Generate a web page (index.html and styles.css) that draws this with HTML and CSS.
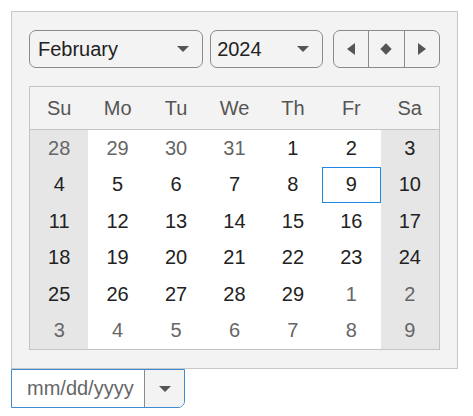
FILE: index.html
```html
<!DOCTYPE html>
<html>
<head>
<meta charset="utf-8">
<link rel="stylesheet" href="styles.css">
</head>
<body>
<div class="wrap">
  <div class="panel">
    <div class="toolbar">
      <div class="select month"><span>February</span><span class="caret"></span></div>
      <div class="select year"><span>2024</span><span class="caret"></span></div>
      <div class="nav">
        <div class="navbtn"><span class="tri-left"></span></div>
        <div class="navbtn"><span class="diamond"></span></div>
        <div class="navbtn"><span class="tri-right"></span></div>
      </div>
    </div>
    <div class="cal">
      <div class="head">
        <div>Su</div><div>Mo</div><div>Tu</div><div>We</div><div>Th</div><div>Fr</div><div>Sa</div>
      </div>
      <div class="days">
        <div class="we other">28</div><div class="other">29</div><div class="other">30</div><div class="other">31</div><div>1</div><div>2</div><div class="we">3</div>
        <div class="we">4</div><div>5</div><div>6</div><div>7</div><div>8</div><div class="sel">9</div><div class="we">10</div>
        <div class="we">11</div><div>12</div><div>13</div><div>14</div><div>15</div><div>16</div><div class="we">17</div>
        <div class="we">18</div><div>19</div><div>20</div><div>21</div><div>22</div><div>23</div><div class="we">24</div>
        <div class="we">25</div><div>26</div><div>27</div><div>28</div><div>29</div><div class="other">1</div><div class="we other">2</div>
        <div class="we other">3</div><div class="other">4</div><div class="other">5</div><div class="other">6</div><div class="other">7</div><div class="other">8</div><div class="we other">9</div>
      </div>
    </div>
  </div>
  <div class="input">
    <div class="field">mm/dd/yyyy</div>
    <div class="btn"><span class="caret"></span></div>
  </div>
</div>
</body>
</html>
```
FILE: styles.css
```css
html, body {
  margin: 0;
  padding: 0;
  background: #ffffff;
}
body {
  font-family: "Liberation Sans", Arial, sans-serif;
  font-size: 20px;
  color: #222;
}
.wrap {
  padding: 11px 0 0 11px;
}
.panel {
  width: 411px;
  padding: 18px 17px 18px 17px;
  background: #f3f3f3;
  border: 1px solid #c8c8c8;
}
.toolbar {
  display: flex;
  height: 38px;
  margin-bottom: 18px;
}
.select {
  box-sizing: border-box;
  height: 38px;
  border: 1px solid #8a8a8a;
  border-radius: 7px;
  display: flex;
  align-items: center;
  justify-content: space-between;
  padding: 0 13px 0 8px;
  color: #222;
}
.month { width: 175px; }
.year { width: 113px; margin-left: 7px; padding-left: 6px; }
.caret {
  width: 0;
  height: 0;
  border-left: 6px solid transparent;
  border-right: 6px solid transparent;
  border-top: 6px solid #555;
}
.nav {
  box-sizing: border-box;
  margin-left: 10px;
  width: 108px;
  height: 38px;
  border: 1px solid #8a8a8a;
  border-radius: 7px;
  display: flex;
}
.navbtn {
  flex: 1;
  display: flex;
  align-items: center;
  justify-content: center;
}
.navbtn + .navbtn {
  border-left: 1px solid #8a8a8a;
}
.tri-left {
  width: 0; height: 0;
  border-top: 6px solid transparent;
  border-bottom: 6px solid transparent;
  border-right: 8px solid #555;
}
.tri-right {
  width: 0; height: 0;
  border-top: 6px solid transparent;
  border-bottom: 6px solid transparent;
  border-left: 8px solid #555;
}
.diamond {
  width: 8px; height: 8px;
  background: #555;
  transform: rotate(45deg);
}
.cal {
  border: 1px solid #c4c4c4;
  background: #ffffff;
}
.head {
  display: grid;
  grid-template-columns: repeat(7, 1fr);
  height: 42px;
  background: #f3f3f3;
  border-bottom: 1px solid #c4c4c4;
  color: #555;
}
.head div, .days div {
  display: flex;
  align-items: center;
  justify-content: center;
}
.days {
  display: grid;
  grid-template-columns: repeat(7, 1fr);
  grid-auto-rows: 36.5px;
}
.days .we { background: #e6e6e6; }
.days .other { color: #666; }
.days .sel {
  outline: 1px solid #1e88e5;
  outline-offset: -1px;
}
.input {
  display: flex;
  width: 174px;
  height: 39px;
  box-sizing: border-box;
  border: 1px solid #3d8bd0;
  border-bottom-right-radius: 7px;
  overflow: hidden;
}
.field {
  flex: 1;
  display: flex;
  align-items: center;
  padding-left: 15px;
  color: #666;
  background: #fff;
}
.btn {
  width: 39px;
  border-left: 1px solid #8a8a8a;
  background: #f3f3f3;
  display: flex;
  align-items: center;
  justify-content: center;
}
```
